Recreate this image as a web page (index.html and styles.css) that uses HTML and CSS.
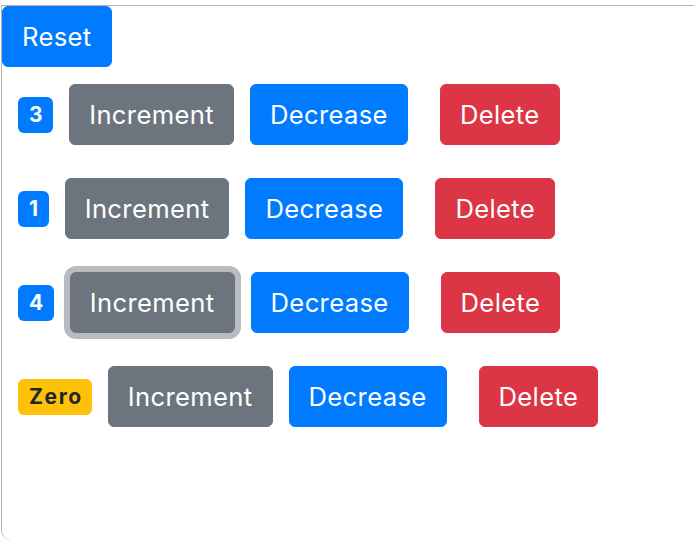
FILE: index.html
```html
<!DOCTYPE html>
<html lang="en">
<head>
    <meta charset="UTF-8">
    <meta name="viewport" content="width=device-width, initial-scale=1.0">
    <title>Counters</title>
    <link rel="stylesheet" href="styles.css">
</head>
<body>
    <div class="frame">
        <button class="btn btn-primary btn-reset">Reset</button>

        <div class="counter">
            <span class="badge badge-primary">3</span>
            <button class="btn btn-secondary">Increment</button>
            <button class="btn btn-primary">Decrease</button>
            <button class="btn btn-danger">Delete</button>
        </div>

        <div class="counter">
            <span class="badge badge-primary">1</span>
            <button class="btn btn-secondary">Increment</button>
            <button class="btn btn-primary">Decrease</button>
            <button class="btn btn-danger">Delete</button>
        </div>

        <div class="counter">
            <span class="badge badge-primary">4</span>
            <button class="btn btn-secondary focus">Increment</button>
            <button class="btn btn-primary">Decrease</button>
            <button class="btn btn-danger">Delete</button>
        </div>

        <div class="counter">
            <span class="badge badge-warning">Zero</span>
            <button class="btn btn-secondary">Increment</button>
            <button class="btn btn-primary">Decrease</button>
            <button class="btn btn-danger">Delete</button>
        </div>
    </div>
</body>
</html>
```

FILE: styles.css
```css
html, body {
    margin: 0;
    height: 100%;
    background: #ffffff;
}

body {
    font-family: Inter, "Liberation Sans", sans-serif;
    color: #212529;
}

.frame {
    box-sizing: border-box;
    margin: 5px 0 0 1px;
    height: calc(100% - 5px);
    border-top: 1px solid #b4b4b4;
    border-left: 1px solid #b4b4b4;
    border-bottom-left-radius: 10px;
}

.btn {
    display: inline-block;
    box-sizing: border-box;
    height: 61px;
    padding: 0 19px;
    font-family: inherit;
    font-size: 25.6px;
    font-weight: 400;
    line-height: 59px;
    letter-spacing: 0.35px;
    color: #ffffff;
    border: 1px solid transparent;
    border-radius: 6px;
    cursor: pointer;
    vertical-align: middle;
}

.btn-primary {
    background-color: #007bff;
    border-color: #007bff;
}

.btn-secondary {
    background-color: #6c757d;
    border-color: #6c757d;
}

.btn-danger {
    background-color: #dc3545;
    border-color: #dc3545;
}

.btn.focus {
    box-shadow: 0 0 0 6px #b8bcc0;
}

.btn-reset {
    display: block;
    margin: 0;
}

.counter {
    display: flex;
    align-items: center;
    margin: 17px 0 33px 16px;
}

.counter .btn-secondary {
    margin: 0 16px;
}

.counter .btn-primary {
    margin-right: 32px;
}

.badge {
    display: inline-block;
    box-sizing: border-box;
    height: 36px;
    padding: 0 9px 0 11px;
    font-size: 21px;
    font-weight: 700;
    line-height: 36px;
    letter-spacing: 1.6px;
    border-radius: 6px;
}

.badge-primary {
    background-color: #007bff;
    color: #ffffff;
}

.badge-warning {
    background-color: #ffc107;
    color: #212529;
}
```
